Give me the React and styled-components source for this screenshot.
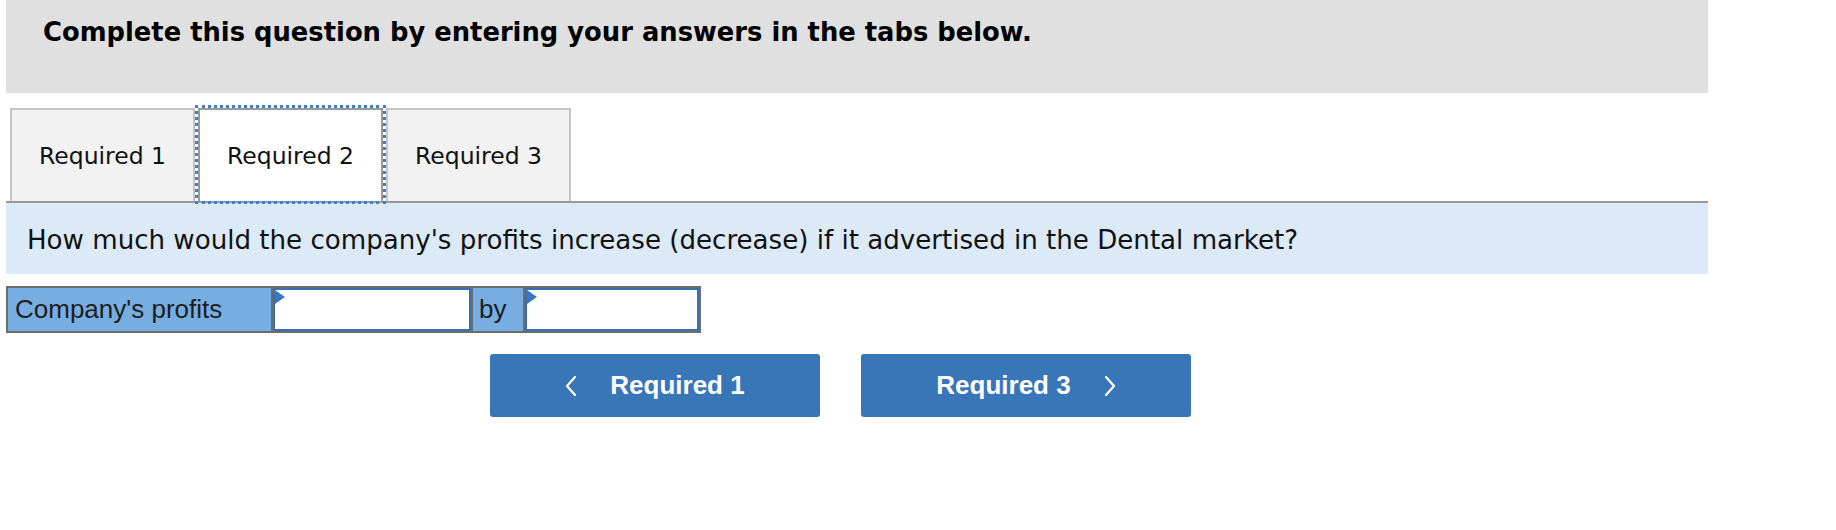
import React from "react";
import styled, { createGlobalStyle } from "styled-components";

const GlobalStyle = createGlobalStyle`
	body {
		margin: 0;
		background: #fff;
		font-family: "DejaVu Sans", Verdana, sans-serif;
	}
`;

const Page = styled.div`
	width: 1702px;
	margin-left: 6px;
`;

const Header = styled.div`
	background-color: #e0e0e0;
	height: 93px;
	box-sizing: border-box;
	padding: 17px 0 0 37px;
	font-size: 25.8px;
	font-weight: bold;
	color: #000;
`;

const TabBar = styled.div`
	display: flex;
	gap: 3px;
	margin-top: 15px;
	padding-left: 4px;
	border-bottom: 2px solid #999;
`;

const Tab = styled.div`
	box-sizing: border-box;
	padding: 33px 27px 32px;
	line-height: 26px;
	font-size: 23.5px;
	color: #111;
	border: 2px solid ${props => (props.active ? "#9a9a9a" : "#c4c4c4")};
	border-bottom: none;
	background-color: ${props => (props.active ? "#fff" : "#f2f2f2")};
	outline: ${props => (props.active ? "3px dotted #3f7fc6" : "none")};
	position: relative;
	z-index: ${props => (props.active ? 1 : 0)};
`;

const Question = styled.div`
	background-color: #dbeaf6;
	padding: 22px 21px 19px;
	font-size: 26.1px;
	color: #111;
`;

const AnswerRow = styled.div`
	display: flex;
	width: 695px;
	height: 47px;
	box-sizing: border-box;
	margin-top: 12px;
	border: 2px solid #6d6d6d;
	font-family: "Liberation Sans", Arial, sans-serif;
	font-size: 26px;
	color: #1e1e1e;
`;

const LabelCell = styled.div`
	width: ${props => props.w}px;
	background-color: #77ade0;
	padding-left: ${props => props.pad}px;
	box-sizing: border-box;
	display: flex;
	align-items: center;
	& + & {
		border-left: 2px solid #6d6d6d;
	}
`;

const InputCell = styled.div`
	width: ${props => props.w}px;
	border-left: 2px solid #6d6d6d;
	position: relative;
	box-sizing: border-box;
	& + div {
		border-left: 2px solid #6d6d6d;
	}
`;

const AnswerInput = styled.input`
	width: 100%;
	height: 100%;
	box-sizing: border-box;
	border: 2px solid #3670b0;
	background: #fff;
	margin: 0;
	padding: 0 8px;
	font: inherit;
	outline: none;
`;

const Marker = styled.span`
	position: absolute;
	left: 2px;
	top: 2px;
	width: 0;
	height: 0;
	border-top: 7px solid transparent;
	border-bottom: 7px solid transparent;
	border-left: 10px solid #3a78c0;
	pointer-events: none;
`;

const Nav = styled.div`
	display: flex;
	gap: 41px;
	margin-top: 21px;
	padding-left: 484px;
`;

const NavButton = styled.button`
	width: 330px;
	height: 63px;
	border: none;
	border-radius: 3px;
	background-color: #3876b7;
	color: #fff;
	font-family: "Liberation Sans", Arial, sans-serif;
	font-size: 26px;
	font-weight: bold;
	display: flex;
	align-items: center;
	justify-content: center;
	gap: 33px;
	cursor: pointer;
	padding: 0;
`;

const Chevron = ({ dir }) => (
	<svg width="12" height="20" viewBox="0 0 12 20" fill="none">
		<polyline
			points={dir === "left" ? "10,1 2,10 10,19" : "2,1 10,10 2,19"}
			stroke="#fff"
			strokeWidth="2.2"
			strokeLinecap="round"
			strokeLinejoin="round"
		/>
	</svg>
);

const App = () => {
	return (
		<Page>
			<GlobalStyle />
			<Header>Complete this question by entering your answers in the tabs below.</Header>
			<TabBar>
				<Tab>Required 1</Tab>
				<Tab active>Required 2</Tab>
				<Tab>Required 3</Tab>
			</TabBar>
			<Question>
				How much would the company's profits increase (decrease) if it advertised in the Dental market?
			</Question>
			<AnswerRow>
				<LabelCell w={263} pad={7}>Company's profits</LabelCell>
				<InputCell w={200}>
					<AnswerInput type="text" />
					<Marker />
				</InputCell>
				<LabelCell w={52} pad={6}>by</LabelCell>
				<InputCell w={176}>
					<AnswerInput type="text" />
					<Marker />
				</InputCell>
			</AnswerRow>
			<Nav>
				<NavButton>
					<Chevron dir="left" />
					Required 1
				</NavButton>
				<NavButton>
					Required 3
					<Chevron dir="right" />
				</NavButton>
			</Nav>
		</Page>
	);
};

export default App;
